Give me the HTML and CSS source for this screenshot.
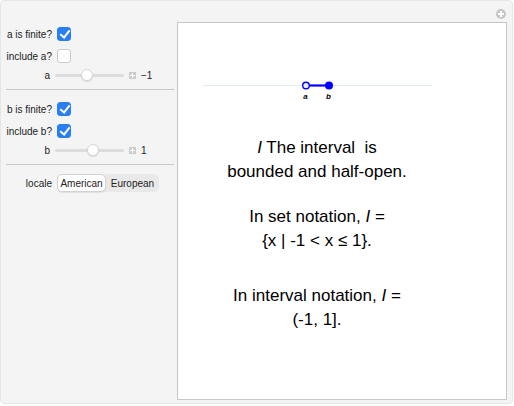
FILE: index.html
```html
<!DOCTYPE html>
<html lang="en">
<head>
  <meta charset="UTF-8">
  <title>Interval</title>
  <link rel="stylesheet" href="styles.css">
</head>
<body>
  <div class="app">
    <span class="corner-plus"></span>
    <div class="panel">
      <div class="row">
        <span class="label">a is finite?</span>
        <span class="check on"></span>
      </div>
      <div class="row">
        <span class="label">include a?</span>
        <span class="check"></span>
      </div>
      <div class="slider-row">
        <span class="label">a</span>
        <span class="track"><span class="thumb" style="left: 32px"></span></span>
        <span class="plus"></span>
        <span class="value">&minus;1</span>
      </div>
      <div class="sep"></div>
      <div class="row">
        <span class="label">b is finite?</span>
        <span class="check on"></span>
      </div>
      <div class="row">
        <span class="label">include b?</span>
        <span class="check on"></span>
      </div>
      <div class="slider-row">
        <span class="label">b</span>
        <span class="track"><span class="thumb" style="left: 38px"></span></span>
        <span class="plus"></span>
        <span class="value">1</span>
      </div>
      <div class="sep"></div>
      <div class="row locale-row">
        <span class="label">locale</span>
        <div class="segmented">
          <span class="seg active">American</span>
          <span class="seg">European</span>
        </div>
      </div>
    </div>

    <div class="output">
      <svg class="numberline" width="278" height="110" viewBox="0 0 278 110">
        <line x1="25" y1="62.5" x2="254" y2="62.5" stroke="#e2eaf6" stroke-width="1"/>
        <line x1="128" y1="62.5" x2="151" y2="62.5" stroke="#0000ff" stroke-width="2.2"/>
        <circle cx="128" cy="62.5" r="3.3" fill="#e8eaff" stroke="#0000ff" stroke-width="1.4"/>
        <circle cx="151" cy="62.5" r="4" fill="#0000ff"/>
        <text x="127.5" y="75.5" class="tick">a</text>
        <text x="150.5" y="75.5" class="tick">b</text>
      </svg>
      <p class="p1"><i>I</i> The interval&nbsp; is<br>bounded and half-open.</p>
      <p class="p2">In set notation, <i>I</i> =<br>{x | -1 &lt; x &le; 1}.</p>
      <p class="p3">In interval notation, <i>I</i> =<br>(-1, 1].</p>
    </div>
  </div>
</body>
</html>
```

FILE: styles.css
```css
body {
  margin: 0;
  background-color: #fff;
  font-family: "Liberation Sans", Arial, sans-serif;
}

.app {
  position: relative;
  box-sizing: border-box;
  width: 513px;
  height: 404px;
  padding: 21px 5px 3px 0;
  display: grid;
  grid-template-columns: 176px 1fr;
  background-color: #f4f4f4;
  border: 1px solid #e6e6e6;
  border-radius: 4px;
}

.corner-plus {
  position: absolute;
  top: 8px;
  right: 6px;
  width: 10px;
  height: 10px;
  border-radius: 50%;
  background-color: #c6c6c6;
}

.corner-plus::before,
.corner-plus::after {
  content: "";
  position: absolute;
  background-color: #fff;
}

.corner-plus::before {
  left: 2px;
  top: 4px;
  width: 6px;
  height: 2px;
}

.corner-plus::after {
  left: 4px;
  top: 2px;
  width: 2px;
  height: 6px;
}

/* controls */

.panel {
  padding-top: 1px;
  font-size: 10px;
  color: #222;
}

.row {
  display: flex;
  align-items: center;
  gap: 5px;
  height: 22px;
}

.label {
  width: 51px;
  text-align: right;
  flex-shrink: 0;
}

.check {
  box-sizing: border-box;
  width: 14px;
  height: 14px;
  border-radius: 3px;
  border: 1px solid #c9c9c9;
  background-color: #fff;
  position: relative;
}

.check.on {
  background-color: #2a7ef4;
  border-color: #2a7ef4;
}

.check.on::after {
  content: "";
  position: absolute;
  left: 4px;
  top: 0;
  width: 4px;
  height: 8px;
  border: solid #fff;
  border-width: 0 2px 2px 0;
  transform: rotate(38deg);
}

.slider-row {
  display: flex;
  align-items: center;
  height: 16px;
}

.slider-row .label {
  width: 49px;
  margin-right: 5px;
}

.track {
  position: relative;
  width: 69px;
  height: 3px;
  border-radius: 2px;
  background-color: #dcdcdc;
}

.thumb {
  position: absolute;
  top: -5px;
  box-sizing: border-box;
  width: 12px;
  height: 12px;
  margin-left: -6px;
  border-radius: 50%;
  background-color: #fff;
  border: 1px solid #d6d6d6;
  box-shadow: 0 1px 1px rgba(0, 0, 0, 0.12);
}

.plus {
  position: relative;
  width: 7px;
  height: 7px;
  margin: 0 5px;
  background-color: #cccccc;
}

.plus::before,
.plus::after {
  content: "";
  position: absolute;
  background-color: #fff;
}

.plus::before {
  left: 1px;
  top: 3px;
  width: 5px;
  height: 1px;
}

.plus::after {
  left: 3px;
  top: 1px;
  width: 1px;
  height: 5px;
}

.value {
  font-size: 10px;
}

.sep {
  height: 1px;
  margin: 6px 3px 8px 5px;
  background-color: #c8c8c8;
}

.locale-row {
  height: 20px;
  margin-top: 1px;
}

.segmented {
  display: flex;
  height: 18px;
  padding: 0;
  border-radius: 5px;
  background-color: #e9e9e9;
}

.seg {
  display: flex;
  align-items: center;
  justify-content: center;
  padding: 0 4px;
  font-size: 10px;
}

.seg.active {
  box-sizing: border-box;
  width: 49px;
  background-color: #fff;
  border: 1px solid #d2d2d2;
  border-radius: 5px;
  box-shadow: 0 1px 1px rgba(0, 0, 0, 0.08);
}

.seg:last-child {
  width: 53px;
  box-sizing: border-box;
}

/* output pane */

.output {
  background-color: #fff;
  border: 1px solid #c6c6c6;
  padding-right: 50px;
  text-align: center;
  font-size: 17px;
  line-height: 24px;
  color: #000;
}

.numberline {
  display: block;
}

.tick {
  font-family: "Liberation Sans", sans-serif;
  font-style: italic;
  font-weight: bold;
  font-size: 8px;
  text-anchor: middle;
}

.output p {
  margin: 0;
}

.p1 {
  margin-top: 3px !important;
}

.p2 {
  margin-top: 21px !important;
}

.p3 {
  margin-top: 31px !important;
}
```
